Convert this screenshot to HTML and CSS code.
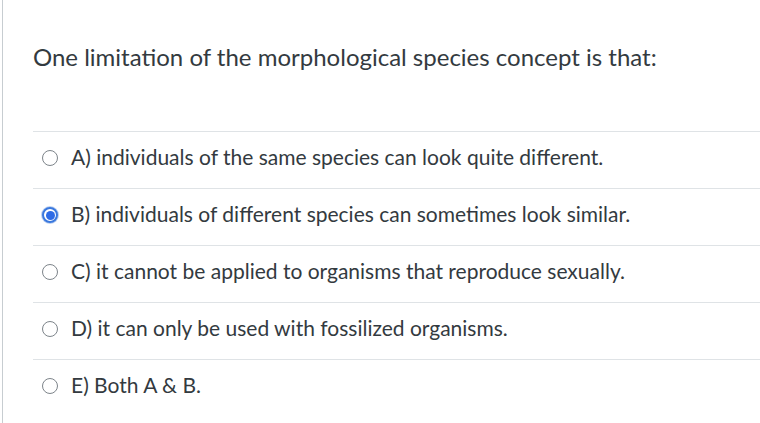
FILE: index.html
```html
<!DOCTYPE html>
<html>
<head>
<meta charset="utf-8">
<link rel="stylesheet" href="styles.css">
</head>
<body>
<div class="page">
  <div class="question">
    <p class="qtext">One limitation of the morphological species concept is that:</p>
    <div class="answers">
      <label class="answer"><span class="radio"></span><span class="atext">A) individuals of the same species can look quite different.</span></label>
      <label class="answer"><span class="radio checked"></span><span class="atext">B) individuals of different species can sometimes look similar.</span></label>
      <label class="answer"><span class="radio"></span><span class="atext">C) it cannot be applied to organisms that reproduce sexually.</span></label>
      <label class="answer"><span class="radio"></span><span class="atext">D) it can only be used with fossilized organisms.</span></label>
      <label class="answer"><span class="radio"></span><span class="atext">E) Both A &amp; B.</span></label>
    </div>
  </div>
</div>
</body>
</html>
```
FILE: styles.css
```css
html, body {
  margin: 0;
  padding: 0;
  background: #fff;
}
body {
  font-family: Lato, "Open Sans", sans-serif;
  color: #333a40;
}
.page {
  margin-left: 2px;
  border-left: 1px solid #c7cdd1;
  height: 423px;
  box-sizing: border-box;
}
.question {
  padding-left: 30px;
}
.qtext {
  margin: 0;
  padding-top: 42px;
  font-size: 24px;
  line-height: 30px;
  height: 131px;
  box-sizing: border-box;
}
.answers {
  display: flex;
  flex-direction: column;
}
.answer {
  display: flex;
  align-items: center;
  height: 57px;
  box-sizing: border-box;
  padding-bottom: 6px;
  border-top: 1px solid #dfe3e6;
  font-size: 21px;
  line-height: 28px;
}
.radio {
  width: 16px;
  height: 16px;
  border: 1.5px solid #7d848a;
  border-radius: 50%;
  margin-left: 9px;
  margin-right: 13px;
  box-sizing: border-box;
  flex: none;
  position: relative;
  top: 1px;
  background: #fff;
}
.radio.checked {
  border: 2px solid #3a78de;
  box-shadow: 0 0 0 1px #bcd0f0;
}
.radio.checked::after {
  content: "";
  position: absolute;
  left: 1.5px;
  top: 1.5px;
  width: 9px;
  height: 9px;
  border-radius: 50%;
  background: #2e6be6;
}
```
